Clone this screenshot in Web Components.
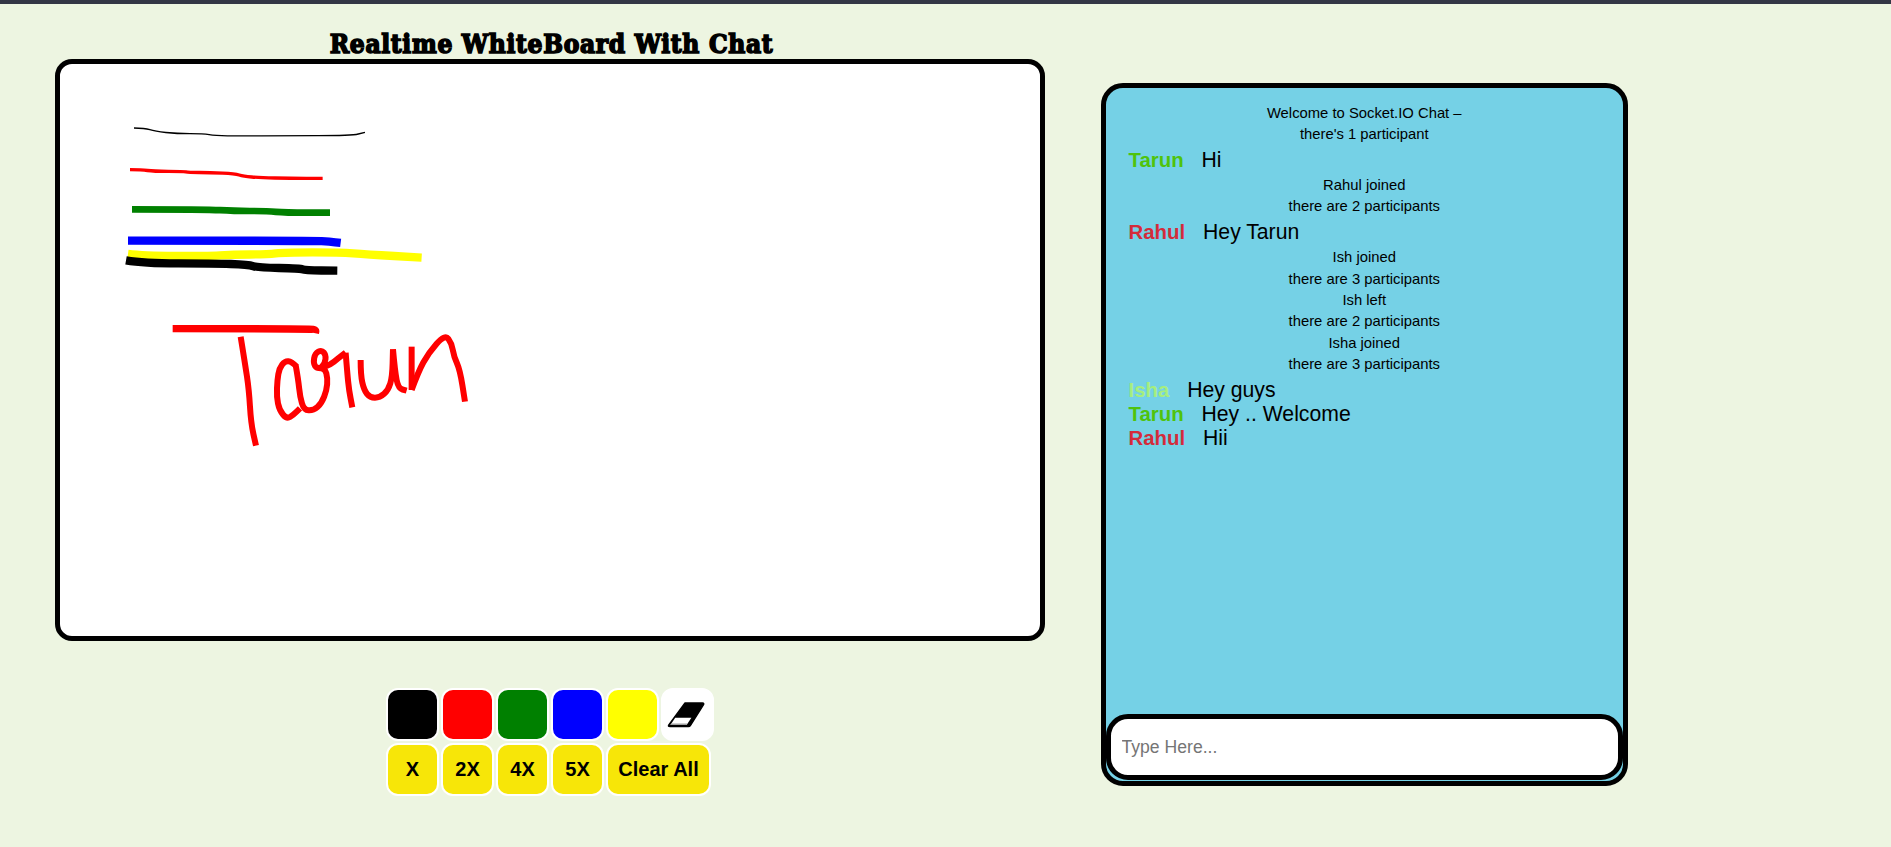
<!DOCTYPE html>
<html lang="en">
<head>
<meta charset="utf-8">
<title>Realtime WhiteBoard With Chat</title>
<style>
  html, body { margin: 0; height: 100%; overflow: hidden; background: #edf5e1; }
  chat-note + chat-msg { margin-top: 2.5px; }
  chat-msg + chat-note { margin-top: 3px; }
</style>
</head>
<body>
<board-app>
  <board-column slot="left">
    <board-canvas></board-canvas>
    <board-toolbar>
      <tool-button slot="colors" color="#000000"></tool-button>
      <tool-button slot="colors" color="#ff0000"></tool-button>
      <tool-button slot="colors" color="#008000"></tool-button>
      <tool-button slot="colors" color="#0000ff"></tool-button>
      <tool-button slot="colors" color="#ffff00"></tool-button>
      <tool-button slot="colors" color="#ffffff">
        <svg width="38" height="26" viewBox="0 0 38 26" style="margin-right:3px">
          <path d="M18 1H35.5Q37.5 1 36.4 2.8L23.5 23.4Q22.8 24.6 21.4 24.6H3Q.6 24.6 1.8 22.8Z" fill="#000" stroke="#000" stroke-width="1.4" stroke-linejoin="round"/>
          <path d="M8.2 15.8H24.4L19.6 23H3.4Z" fill="#fff"/>
          <path d="M4.4 21.4H20.6L19.6 23H3.4Z" fill="#a0a0a0"/>
        </svg>
      </tool-button>
      <tool-button slot="sizes">X</tool-button>
      <tool-button slot="sizes">2X</tool-button>
      <tool-button slot="sizes">4X</tool-button>
      <tool-button slot="sizes">5X</tool-button>
      <tool-button slot="sizes" wide>Clear All</tool-button>
    </board-toolbar>
  </board-column>
  <chat-panel slot="right">
    <chat-note>Welcome to Socket.IO Chat –<br>there's 1 participant</chat-note>
    <chat-msg name="Tarun" color="#4fc30d">Hi</chat-msg>
    <chat-note>Rahul joined<br>there are 2 participants</chat-note>
    <chat-msg name="Rahul" color="#d42b3a">Hey Tarun</chat-msg>
    <chat-note>Ish joined<br>there are 3 participants</chat-note>
    <chat-note>Ish left<br>there are 2 participants</chat-note>
    <chat-note>Isha joined<br>there are 3 participants</chat-note>
    <chat-msg name="Isha" color="#a6ee7e">Hey guys</chat-msg>
    <chat-msg name="Tarun" color="#4fc30d">Hey .. Welcome</chat-msg>
    <chat-msg name="Rahul" color="#d42b3a">Hii</chat-msg>
  </chat-panel>
</board-app>

<script>
class BoardApp extends HTMLElement {
  constructor() {
    super();
    this.attachShadow({ mode: 'open' }).innerHTML = `
      <style>
        :host { display: block; font-family: "Liberation Sans", Arial, sans-serif; }
        .bar { height: 4px; background: #333645; }
        main { display: flex; align-items: flex-start; gap: 55.5px; padding-left: 55px; }
      </style>
      <div class="bar"></div>
      <main>
        <slot name="left"></slot>
        <slot name="right"></slot>
      </main>`;
  }
}

class BoardColumn extends HTMLElement {
  constructor() {
    super();
    this.attachShadow({ mode: 'open' }).innerHTML = `
      <style>
        :host { display: block; width: 990px; }
        h1 {
          margin: 0;
          height: 55px;
          padding: 28px 0 0 3px;
          box-sizing: border-box;
          text-align: center;
          font: bold 26px/25px "DejaVu Serif Condensed", "DejaVu Serif", serif;
          -webkit-text-stroke: 1.5px #000;
          color: #000;
          letter-spacing: 0.7px;
          white-space: nowrap;
        }
      </style>
      <h1>Realtime WhiteBoard With Chat</h1>
      <slot></slot>`;
  }
}

// quadratic curve through the midpoints, so traced strokes don't look angular
function smooth(points) {
  const p = points.trim().split(/\s+/).map(s => s.split(',').map(Number));
  let d = `M${p[0]}`;
  for (let i = 1; i < p.length - 1; i++) {
    const mx = (p[i][0] + p[i + 1][0]) / 2;
    const my = (p[i][1] + p[i + 1][1]) / 2;
    d += ` Q${p[i]} ${mx},${my}`;
  }
  return d + ` L${p[p.length - 1]}`;
}

function ink(color, width, points) {
  return `<path d="${smooth(points)}" stroke="${color}" stroke-width="${width}"/>`;
}

class BoardCanvas extends HTMLElement {
  constructor() {
    super();
    // strokes are traced at 3x, the groups scale them back down
    this.attachShadow({ mode: 'open' }).innerHTML = `
      <style>
        :host {
          display: block;
          height: 582px;
          box-sizing: border-box;
          border: 5px solid #000;
          border-radius: 17px;
          background: #fff;
          overflow: hidden;
        }
        svg { display: block; width: 980px; height: 572px; }
        path { fill: none; stroke-linejoin: round; }
      </style>
      <svg viewBox="60 64 980 572">
        <g transform="translate(100 100) scale(.3333)">
          ${ink('#000', 4, '102,84 134,84 165,94 230,101 310,101 345,107 420,108 550,107 755,107 795,97')}
          ${ink('#f00', 10, '90,209 125,209 160,214 250,214 265,217 330,218 405,221 430,229 480,233 570,235 668,235')}
          ${ink('#008000', 20, '96,328 320,328 400,333 500,333 555,338 690,338')}
          ${ink('#00f', 25, '84,422 640,422 690,425 722,429')}
          ${ink('#ff0', 25, '84,462 130,468 320,468 400,464 500,463 555,457 720,457 800,463 965,473')}
          ${ink('#000', 25, '78,481 130,490 340,490 445,494 475,503 600,505 615,511 712,512')}
        </g>
        <g transform="translate(150 300) scale(.3333)">
          ${ink('#f00', 22, '68,86 480,86 498,90 496,100')}
          ${ink('#f00', 18, '272,110 285,190 297,270 303,370 318,437')}
          ${ink('#f00', 18, '440,200 425,185 405,183 388,205 382,240 380,290 388,330 410,357 430,345 450,325')}
          ${ink('#f00', 18, '437,195 445,240 450,290 462,330 490,332 515,310 530,270 533,235 525,205 500,205 490,190 495,160 515,150 528,165 525,190 510,205 540,195 565,175 587,158')}
          ${ink('#f00', 18, '587,158 592,220 597,270 607,322')}
          ${ink('#f00', 18, '632,180 632,225 642,270 660,293 690,293 715,270 727,230 729,148')}
          ${ink('#f00', 18, '729,148 735,215 745,265 770,272')}
          ${ink('#f00', 18, '785,140 785,270')}
          ${ink('#f00', 18, '785,270 805,215 835,160 885,103 905,130 912,170 930,210 945,305')}
        </g>
      </svg>`;
  }
}

class BoardToolbar extends HTMLElement {
  constructor() {
    super();
    this.attachShadow({ mode: 'open' }).innerHTML = `
      <style>
        :host { display: flex; flex-direction: column; gap: 2.3px; width: 340px; margin: 47px 0 0 331px; }
        .row { display: flex; gap: 2px; }
      </style>
      <div class="row"><slot name="colors"></slot></div>
      <div class="row"><slot name="sizes"></slot></div>`;
  }
}

class ToolButton extends HTMLElement {
  constructor() {
    super();
    const color = this.getAttribute('color') || '#f7e608';
    const width = this.hasAttribute('wide') ? 105 : 53;
    this.attachShadow({ mode: 'open' }).innerHTML = `
      <style>
        :host { display: block; }
        button {
          display: flex;
          align-items: center;
          justify-content: center;
          width: ${width}px;
          height: 53px;
          padding: 0;
          box-sizing: border-box;
          border: 2px solid #fff;
          border-radius: 12px;
          background: ${color};
          color: #000;
          font: bold 20px "Liberation Sans", Arial, sans-serif;
          cursor: pointer;
        }
      </style>
      <button><slot></slot></button>`;
  }
}

class ChatPanel extends HTMLElement {
  constructor() {
    super();
    this.attachShadow({ mode: 'open' }).innerHTML = `
      <style>
        :host {
          display: flex;
          flex-direction: column;
          width: 527.5px;
          height: 703px;
          margin-top: 79px;
          box-sizing: border-box;
          border: 5px solid #000;
          border-radius: 22px;
          background: #75d1e6;
          overflow: hidden;
        }
        .messages { flex: 1; padding-top: 14.5px; }
        input {
          display: block;
          width: 100%;
          height: 66px;
          margin-bottom: 1px;
          padding: 0 11px;
          box-sizing: border-box;
          border: 5px solid #000;
          border-radius: 22px;
          outline: none;
          background: #fff;
          font: 17.6px "Liberation Sans", Arial, sans-serif;
        }
        input::placeholder { color: #757575; }
      </style>
      <div class="messages"><slot></slot></div>
      <input type="text" placeholder="Type Here...">`;
  }
}

class ChatNote extends HTMLElement {
  constructor() {
    super();
    this.attachShadow({ mode: 'open' }).innerHTML = `
      <style>
        :host {
          display: block;
          text-align: center;
          font-size: 14.8px;
          line-height: 21.4px;
          color: #000;
        }
      </style>
      <slot></slot>`;
  }
}

class ChatMsg extends HTMLElement {
  constructor() {
    super();
    this.attachShadow({ mode: 'open' }).innerHTML = `
      <style>
        :host {
          display: block;
          padding-left: 23px;
          font-size: 21.2px;
          line-height: 24px;
          color: #000;
        }
        b { margin-right: 12px; font-size: 20.4px; color: ${this.getAttribute('color')}; }
      </style>
      <b>${this.getAttribute('name')}</b> <slot></slot>`;
  }
}

customElements.define('board-app', BoardApp);
customElements.define('board-column', BoardColumn);
customElements.define('board-canvas', BoardCanvas);
customElements.define('board-toolbar', BoardToolbar);
customElements.define('tool-button', ToolButton);
customElements.define('chat-panel', ChatPanel);
customElements.define('chat-note', ChatNote);
customElements.define('chat-msg', ChatMsg);
</script>
</body>
</html>
